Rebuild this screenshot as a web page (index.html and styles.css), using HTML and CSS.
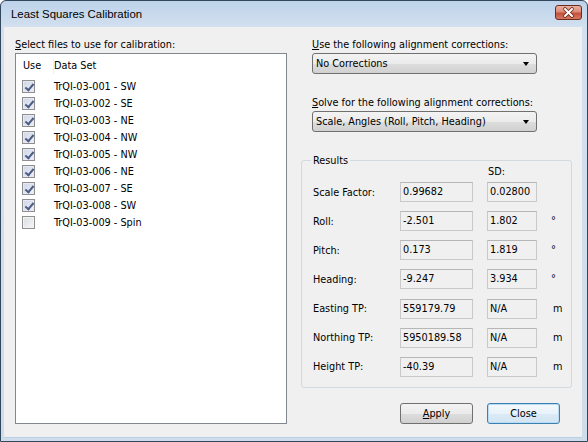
FILE: index.html
```html
<!DOCTYPE html>
<html>
<head>
<meta charset="utf-8">
<link rel="stylesheet" href="styles.css">
</head>
<body>
<div class="window">
  <div class="titlebar">
    <span class="title">Least Squares Calibration</span>
    <div class="close-btn">
      <svg width="25" height="13" viewBox="0 0 25 13">
        <path d="M9 3 L16 10 M16 3 L9 10" stroke="#6a2418" stroke-width="3.6" stroke-linecap="round" fill="none"/>
        <path d="M9 3 L16 10 M16 3 L9 10" stroke="#ffffff" stroke-width="2" stroke-linecap="round" fill="none"/>
      </svg>
    </div>
  </div>
  <div class="client">
    <div class="left">
      <div class="label"><u>S</u>elect files to use for calibration:</div>
      <div class="listbox">
        <div class="lv-header"><span class="col-use">Use</span><span class="col-data">Data Set</span></div>
        <div class="lv-row"><span class="chk on"></span><span>TrQI-03-001 - SW</span></div>
        <div class="lv-row"><span class="chk on"></span><span>TrQI-03-002 - SE</span></div>
        <div class="lv-row"><span class="chk on"></span><span>TrQI-03-003 - NE</span></div>
        <div class="lv-row"><span class="chk on"></span><span>TrQI-03-004 - NW</span></div>
        <div class="lv-row"><span class="chk on"></span><span>TrQI-03-005 - NW</span></div>
        <div class="lv-row"><span class="chk on"></span><span>TrQI-03-006 - NE</span></div>
        <div class="lv-row"><span class="chk on"></span><span>TrQI-03-007 - SE</span></div>
        <div class="lv-row"><span class="chk on"></span><span>TrQI-03-008 - SW</span></div>
        <div class="lv-row"><span class="chk"></span><span>TrQI-03-009 - Spin</span></div>
      </div>
    </div>
    <div class="right">
      <div class="label"><u>U</u>se the following alignment corrections:</div>
      <div class="combo"><span>No Corrections</span><span class="arrow"></span></div>
      <div class="label second"><u>S</u>olve for the following alignment corrections:</div>
      <div class="combo"><span>Scale, Angles (Roll, Pitch, Heading)</span><span class="arrow"></span></div>
      <fieldset class="group">
        <legend>Results</legend>
        <div class="results head">
          <span></span><span></span><span class="sd">SD:</span><span></span>
        </div>
        <div class="results">
          <span class="rl">Scale Factor:</span><span class="tb">0.99682</span><span class="tb">0.02800</span><span class="unit"></span>
          <span class="rl">Roll:</span><span class="tb">-2.501</span><span class="tb">1.802</span><span class="unit deg">°</span>
          <span class="rl">Pitch:</span><span class="tb">0.173</span><span class="tb">1.819</span><span class="unit deg">°</span>
          <span class="rl">Heading:</span><span class="tb">-9.247</span><span class="tb">3.934</span><span class="unit deg">°</span>
          <span class="rl">Easting TP:</span><span class="tb">559179.79</span><span class="tb">N/A</span><span class="unit">m</span>
          <span class="rl">Northing TP:</span><span class="tb">5950189.58</span><span class="tb">N/A</span><span class="unit">m</span>
          <span class="rl">Height TP:</span><span class="tb">-40.39</span><span class="tb">N/A</span><span class="unit">m</span>
        </div>
      </fieldset>
      <div class="buttons">
        <button class="btn"><u>A</u>pply</button>
        <button class="btn default">Close</button>
      </div>
    </div>
  </div>
</div>
</body>
</html>
```
FILE: styles.css
```css
html, body {
  margin: 0;
  padding: 0;
  background: #ffffff;
}
body {
  font-family: "DejaVu Sans Condensed", "Liberation Sans", sans-serif;
  font-size: 10.8px;
  color: #000;
}
.window {
  width: 588px;
  height: 442px;
  box-sizing: border-box;
  border: 1px solid #33475c;
  border-radius: 6px 6px 0 0;
  background: linear-gradient(#bdd2ea, #d2e0ef 26px, #cfdcea);
  display: flex;
  flex-direction: column;
  overflow: hidden;
}
.titlebar {
  height: 26px;
  flex: none;
  display: flex;
  justify-content: space-between;
  align-items: flex-start;
  padding: 0 5px 0 10px;
  box-sizing: border-box;
}
.title {
  font-family: "Liberation Sans", sans-serif;
  font-size: 11.4px;
  line-height: 14px;
  margin-top: 6px;
  color: #000;
}
.close-btn {
  width: 27px;
  height: 15px;
  box-sizing: border-box;
  margin-top: 4px;
  border: 1px solid #70291d;
  border-radius: 3px;
  background: linear-gradient(#eab0a0, #dc8a76 45%, #c6503b 55%, #d47a62);
  display: flex;
}
.client {
  flex: 1;
  margin: 0 5px 3px 3px;
  background: #f0f0f0;
  display: grid;
  grid-template-columns: 272px 271px;
  column-gap: 14px;
  padding: 11px 10px 13px 11px;
  box-sizing: border-box;
  border-bottom: 1px solid #b8d0e8;
}
.label {
  height: 13px;
  line-height: 13px;
  white-space: nowrap;
}
.left {
  display: flex;
  flex-direction: column;
}
.listbox {
  margin-top: 2px;
  flex: 1;
  box-sizing: border-box;
  border: 1px solid #828790;
  background: #fff;
}
.lv-header {
  height: 24px;
  display: grid;
  grid-template-columns: 38px 1fr;
  align-items: center;
  padding-bottom: 1px;
  box-sizing: border-box;
}
.col-use {
  padding-left: 7px;
  border-right: 1px solid #f0f0f0;
  line-height: 16px;
}
.lv-row {
  height: 17px;
  display: grid;
  grid-template-columns: 38px 1fr;
  align-items: center;
  white-space: nowrap;
}
.chk {
  width: 13px;
  height: 13px;
  box-sizing: border-box;
  margin-left: 6px;
  border: 1px solid #8f8f8f;
  background: linear-gradient(135deg, #d8dbe2, #f6f7f9);
  box-shadow: inset 0 0 0 1px #f2f2f2;
  position: relative;
}
.chk.on {
  background: linear-gradient(135deg, #cfd6e8, #eef0f8);
  box-shadow: inset 0 0 0 1px #e6e9f3;
}
.chk.on::after {
  content: "";
  position: absolute;
  left: 3.5px;
  top: 0.5px;
  width: 3px;
  height: 7px;
  border-right: 2px solid #4c5d85;
  border-bottom: 2px solid #4c5d85;
  transform: rotate(40deg);
}
.right {
  display: flex;
  flex-direction: column;
}
.right > .label {
  padding-left: 11px;
}
.right > .label.second {
  margin-top: 22px;
}
.combo {
  margin: 2px 0 0 11px;
  width: 225px;
  height: 21px;
  box-sizing: border-box;
  border: 1px solid #707070;
  border-radius: 3px;
  background: linear-gradient(#f3f3f3, #ebebeb 50%, #dddddd 51%, #d1d1d1);
  display: flex;
  align-items: center;
  justify-content: space-between;
  padding: 0 7px 0 3px;
  white-space: nowrap;
}
.arrow {
  width: 0;
  height: 0;
  border-left: 3.5px solid transparent;
  border-right: 3.5px solid transparent;
  border-top: 4px solid #000;
}
.group {
  margin: 22px 0 0 0;
  padding: 0 0 10px 11px;
  border: 1px solid #d2d9df;
  border-radius: 3px;
  min-width: 0;
}
.group legend {
  margin-left: -2px;
  padding: 0 2px;
  height: 13px;
  line-height: 13px;
}
.results {
  display: grid;
  grid-template-columns: 73px 73px 50px auto;
  column-gap: 14px;
  grid-auto-rows: 20px;
  row-gap: 9.17px;
  align-items: center;
  white-space: nowrap;
}
.results.head {
  margin-top: -2px;
  margin-bottom: 4px;
  grid-auto-rows: 13px;
  line-height: 13px;
}
.sd {
  padding-left: 1px;
}
.tb {
  height: 20px;
  box-sizing: border-box;
  border: 1px solid #c9c9c9;
  border-top-color: #b6b6b6;
  background: #f0f0f0;
  padding-left: 2px;
  line-height: 18px;
}
.unit {
  line-height: 18px;
}
.unit:not(.deg) {
  padding-left: 2px;
}
.buttons {
  margin-top: auto;
  display: flex;
  justify-content: flex-end;
  gap: 14px;
  padding-right: 12px;
}
.btn {
  width: 73px;
  height: 21px;
  box-sizing: border-box;
  border: 1px solid #707070;
  border-radius: 3px;
  background: linear-gradient(#f3f3f3, #ebebeb 50%, #dddddd 51%, #d0d0d0);
  font: inherit;
  color: #000;
  padding: 0;
  line-height: 18px;
}
.btn.default {
  border-color: #3c7fb1;
  background: linear-gradient(#f4f9fd, #e8f2fa 50%, #dbeaf5 51%, #d2e5f3);
  box-shadow: inset 0 0 0 1px #b9dcf3;
}
```
